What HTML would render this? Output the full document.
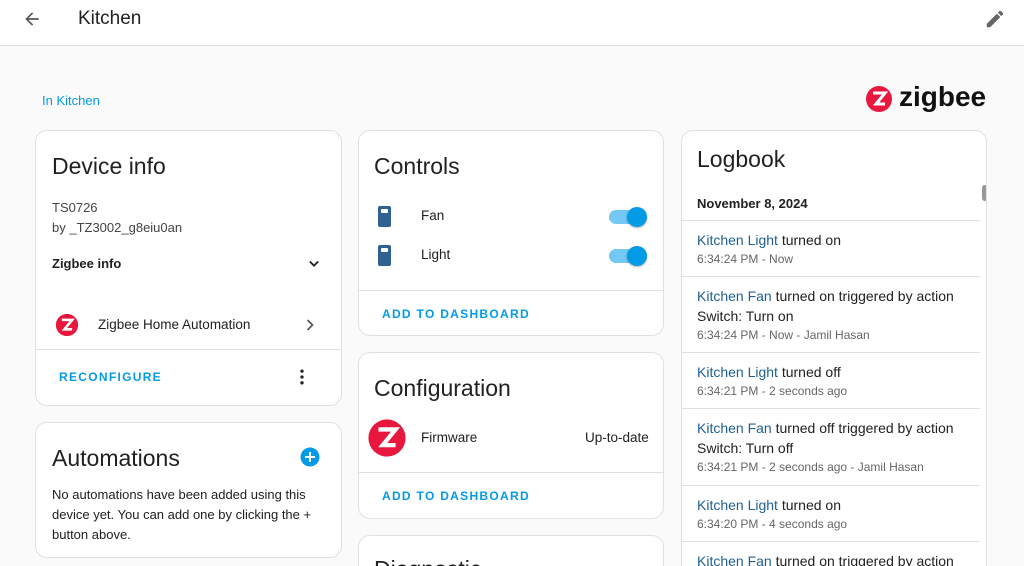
<!DOCTYPE html><html style="overflow:hidden;height:566px"><head><style>
*{box-sizing:border-box;margin:0;padding:0}
body{width:1024px;height:566px;overflow:hidden;background:#fafafa;font-family:"Liberation Sans",sans-serif;color:#212121;position:relative}
.a{position:absolute}
.hdr{left:0;top:0;width:1024px;height:46px;background:#fff;border-bottom:1px solid #e0e0e0}
.card{position:absolute;background:#fff;border:1px solid #e0e0e0;border-radius:12px;overflow:hidden}
.t{font-size:23px;color:#212121}
.btn{font-size:12px;font-weight:bold;letter-spacing:1.3px;color:#039be5}
.sep{position:absolute;left:0;right:0;height:1px;background:#e0e0e0}
.sw{position:absolute;width:34px;height:14px;border-radius:7px;background:#74c8f4}
.sw::after{content:"";position:absolute;right:-4px;top:-3px;width:20px;height:20px;border-radius:50%;background:#039be5;box-shadow:0 1px 2px rgba(0,0,0,.3)}
.ic{position:absolute;width:13px;height:21px;background:#2f6292;border-radius:2px}
.ic::after{content:"";position:absolute;left:3px;top:3px;width:7px;height:4px;background:#fff;border-radius:1px}
.lg{font-size:14px;color:#212121;position:absolute;left:15px}
.lg b{font-weight:normal;color:#1f5f94}
.sm{font-size:12px;color:#666;position:absolute;left:15px}
</style></head><body>
<div class="a hdr">
<svg class="a" style="left:22px;top:9px" width="20" height="20" viewBox="0 0 24 24"><path d="M20 11H7.8l5.6-5.6L12 4l-8 8 8 8 1.4-1.4L7.8 13H20z" fill="#555"/></svg>
<div class="a" style="left:78px;top:8px;font-size:19px">Kitchen</div>
<svg class="a" style="left:984px;top:8px" width="22" height="22" viewBox="0 0 24 24"><path d="M3 17.25V21h3.75L17.8 9.94l-3.75-3.75zM20.7 7.04a1 1 0 000-1.41l-2.34-2.34a1 1 0 00-1.41 0l-1.83 1.83 3.75 3.75z" fill="#666"/></svg>
</div>
<div class="a" style="left:42px;top:93px;font-size:13px;color:#039be5">In Kitchen</div>
<svg class="a" style="left:865px;top:85px" width="28" height="28" viewBox="0 0 28 28"><circle cx="14" cy="14" r="13" fill="#e8173d"/><path d="M8 8h12l-9 11h9" stroke="#fff" stroke-width="3" fill="none"/></svg>
<div class="a" style="left:899px;top:81px;font-size:28px;font-weight:bold;color:#111">zigbee</div>

<div class="card" style="left:35px;top:130px;width:307px;height:276px">
<div class="a t" style="left:16px;top:22px">Device info</div>
<div class="a" style="left:16px;top:69px;font-size:13px;color:#444">TS0726</div>
<div class="a" style="left:16px;top:89px;font-size:13px;color:#444">by _TZ3002_g8eiu0an</div>
<div class="a" style="left:16px;top:125px;font-size:13px;font-weight:bold">Zigbee info</div>
<svg class="a" style="left:268px;top:123px" width="20" height="20" viewBox="0 0 24 24"><path d="M7 9l5 5 5-5" stroke="#222" stroke-width="2.2" fill="none"/></svg>
<svg class="a" style="left:19px;top:182px" width="24" height="24" viewBox="0 0 28 28"><circle cx="14" cy="14" r="13" fill="#e8173d"/><path d="M8 8h12l-9 11h9" stroke="#fff" stroke-width="3" fill="none"/></svg>
<div class="a" style="left:62px;top:186px;font-size:13.5px">Zigbee Home Automation</div>
<svg class="a" style="left:264px;top:184px" width="20" height="20" viewBox="0 0 24 24"><path d="M9 6l6 6-6 6" stroke="#555" stroke-width="2" fill="none"/></svg>
<div class="sep" style="top:218px"></div>
<div class="a btn" style="left:23px;top:239px">RECONFIGURE</div>
<svg class="a" style="left:256px;top:236px" width="20" height="20" viewBox="0 0 24 24"><circle cx="12" cy="5" r="2" fill="#222"/><circle cx="12" cy="12" r="2" fill="#222"/><circle cx="12" cy="19" r="2" fill="#222"/></svg>
</div>

<div class="card" style="left:35px;top:422px;width:307px;height:136px">
<div class="a t" style="left:16px;top:22px">Automations</div>
<svg class="a" style="left:264px;top:24px" width="20" height="20" viewBox="0 0 20 20"><circle cx="10" cy="10" r="9.5" fill="#039be5"/><path d="M10 5v10M5 10h10" stroke="#fff" stroke-width="2"/></svg>
<div class="a" style="left:16px;top:62px;width:280px;font-size:13px;line-height:20px">No automations have been added using this device yet. You can add one by clicking the + button above.</div>
</div>

<div class="card" style="left:358px;top:130px;width:306px;height:206px">
<div class="a t" style="left:15px;top:22px">Controls</div>
<div class="ic" style="left:19px;top:75px"></div>
<div class="a" style="left:62px;top:77px;font-size:13.5px">Fan</div>
<div class="sw" style="left:250px;top:79px"></div>
<div class="ic" style="left:19px;top:114px"></div>
<div class="a" style="left:62px;top:116px;font-size:13.5px">Light</div>
<div class="sw" style="left:250px;top:118px"></div>
<div class="sep" style="top:159px"></div>
<div class="a btn" style="left:23px;top:176px">ADD TO DASHBOARD</div>
</div>

<div class="card" style="left:358px;top:352px;width:306px;height:167px">
<div class="a t" style="left:15px;top:22px">Configuration</div>
<svg class="a" style="left:8px;top:65px" width="40" height="40" viewBox="0 0 28 28"><circle cx="14" cy="14" r="13" fill="#e8173d"/><path d="M8 8h12l-9 11h9" stroke="#fff" stroke-width="3" fill="none"/></svg>
<div class="a" style="left:62px;top:77px;font-size:13.5px">Firmware</div>
<div class="a" style="left:226px;top:77px;font-size:13.5px">Up-to-date</div>
<div class="sep" style="top:119px"></div>
<div class="a btn" style="left:23px;top:136px">ADD TO DASHBOARD</div>
</div>

<div class="card" style="left:358px;top:535px;width:306px;height:60px">
<div class="a t" style="left:15px;top:20px">Diagnostic</div>
</div>

<div class="card" style="left:681px;top:130px;width:306px;height:460px">
<div class="a t" style="left:15px;top:15px">Logbook</div>
<div class="a" style="left:300px;top:54px;width:5px;height:16px;border-radius:3px;background:#999"></div>
<div class="a" style="left:15px;top:65px;font-size:13px;font-weight:bold">November 8, 2024</div>
<div class="sep" style="top:89px;right:6px"></div>
<div class="lg" style="top:101px"><b>Kitchen Light</b> turned on</div>
<div class="sm" style="top:121px">6:34:24 PM - Now</div>
<div class="sep" style="top:145px;right:6px"></div>
<div class="lg" style="top:157px"><b>Kitchen Fan</b> turned on triggered by action</div>
<div class="lg" style="top:177px">Switch: Turn on</div>
<div class="sm" style="top:197px">6:34:24 PM - Now - Jamil Hasan</div>
<div class="sep" style="top:221px;right:6px"></div>
<div class="lg" style="top:233px"><b>Kitchen Light</b> turned off</div>
<div class="sm" style="top:253px">6:34:21 PM - 2 seconds ago</div>
<div class="sep" style="top:277px;right:6px"></div>
<div class="lg" style="top:289px"><b>Kitchen Fan</b> turned off triggered by action</div>
<div class="lg" style="top:309px">Switch: Turn off</div>
<div class="sm" style="top:329px">6:34:21 PM - 2 seconds ago - Jamil Hasan</div>
<div class="sep" style="top:354px;right:6px"></div>
<div class="lg" style="top:366px"><b>Kitchen Light</b> turned on</div>
<div class="sm" style="top:386px">6:34:20 PM - 4 seconds ago</div>
<div class="sep" style="top:410px;right:6px"></div>
<div class="lg" style="top:422px"><b>Kitchen Fan</b> turned on triggered by action</div>
</div>
</body></html>
